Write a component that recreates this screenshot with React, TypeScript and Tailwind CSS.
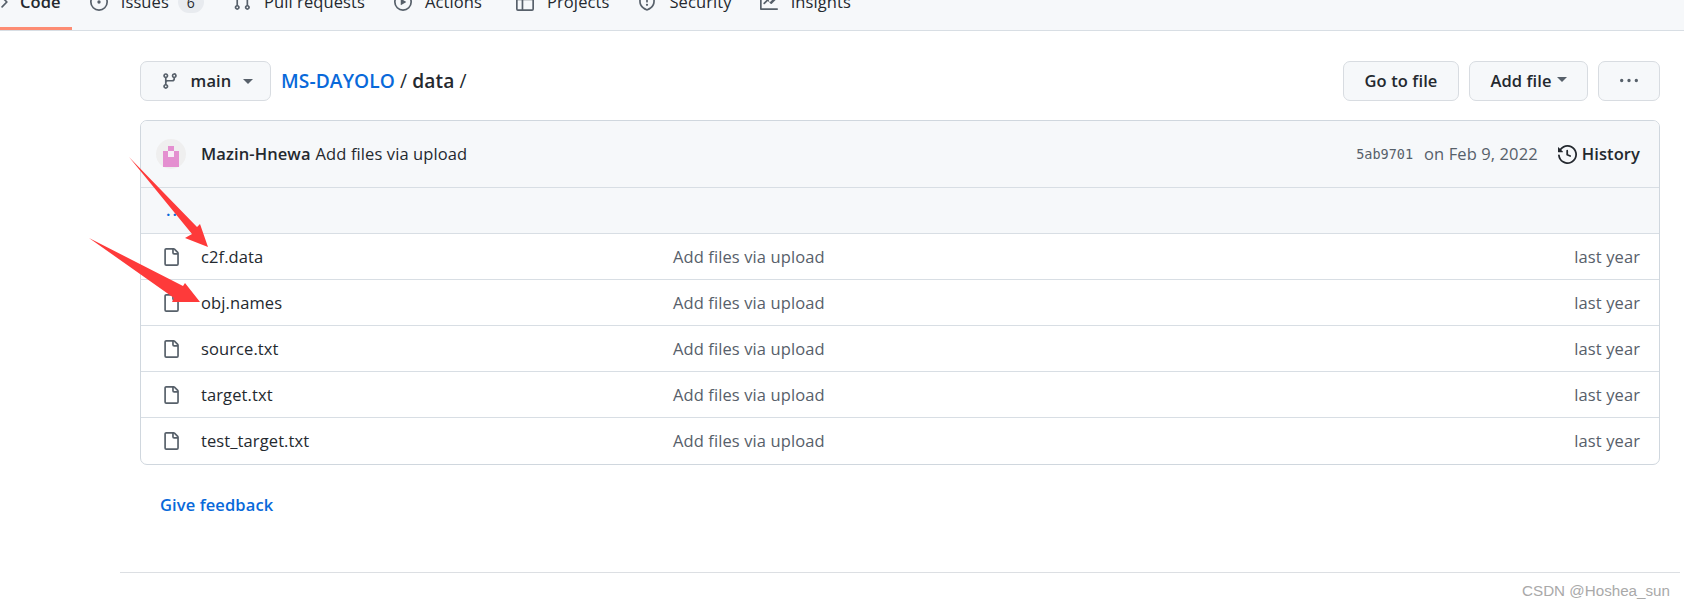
import React from "react";

const P = {
  code: "M11.28 3.22l4.25 4.25a.75.75 0 010 1.06l-4.25 4.25a.749.749 0 01-1.06-1.06L13.94 8l-3.72-3.72a.749.749 0 011.06-1.06zm-6.56 0a.751.751 0 011.042.018.751.751 0 01.018 1.042L2.06 8l3.72 3.72a.749.749 0 01-1.06 1.06L.47 8.53a.75.75 0 010-1.06l4.25-4.25z",
  issue: "M8 9.5a1.5 1.5 0 1 0 0-3 1.5 1.5 0 0 0 0 3ZM8 0a8 8 0 1 1 0 16A8 8 0 0 1 8 0ZM1.5 8a6.5 6.5 0 1 0 13 0 6.5 6.5 0 0 0-13 0Z",
  pr: "M1.5 3.25a2.25 2.25 0 1 1 3 2.122v5.256a2.251 2.251 0 1 1-1.5 0V5.372A2.25 2.25 0 0 1 1.5 3.25Zm5.677-.177L9.573.677A.25.25 0 0 1 10 .854V2.5h1A2.5 2.5 0 0 1 13.5 5v5.628a2.251 2.251 0 1 1-1.5 0V5a1 1 0 0 0-1-1h-1v1.646a.25.25 0 0 1-.427.177L7.177 3.427a.25.25 0 0 1 0-.354ZM3.75 2.5a.75.75 0 1 0 0 1.5.75.75 0 0 0 0-1.5Zm0 9.5a.75.75 0 1 0 0 1.5.75.75 0 0 0 0-1.5Zm8.25.75a.75.75 0 1 0 1.5 0 .75.75 0 0 0-1.5 0Z",
  play: "M8 0a8 8 0 1 1 0 16A8 8 0 0 1 8 0ZM1.5 8a6.5 6.5 0 1 0 13 0 6.5 6.5 0 0 0-13 0Zm4.879-2.773 4.264 2.559a.25.25 0 0 1 0 .428l-4.264 2.559A.25.25 0 0 1 6 10.559V5.442a.25.25 0 0 1 .379-.215Z",
  table: "M0 1.75C0 .784.784 0 1.75 0h12.5C15.216 0 16 .784 16 1.75v12.5A1.75 1.75 0 0 1 14.25 16H1.75A1.75 1.75 0 0 1 0 14.25ZM6.5 6.5v8h7.75a.25.25 0 0 0 .25-.25V6.5Zm8-1.5V1.75a.25.25 0 0 0-.25-.25H6.5V5Zm-13 1.5v7.75c0 .138.112.25.25.25H5v-8ZM5 5V1.5H1.75a.25.25 0 0 0-.25.25V5Z",
  shield: "M7.467.133a1.748 1.748 0 0 1 1.066 0l5.25 1.68A1.75 1.75 0 0 1 15 3.48V7c0 1.566-.32 3.182-1.303 4.682-.983 1.498-2.585 2.813-5.032 3.855a1.697 1.697 0 0 1-1.33 0c-2.447-1.042-4.049-2.357-5.032-3.855C1.32 10.182 1 8.566 1 7V3.48a1.75 1.75 0 0 1 1.217-1.667Zm.61 1.429a.25.25 0 0 0-.153 0l-5.25 1.68a.25.25 0 0 0-.174.238V7c0 1.358.275 2.666 1.057 3.86.784 1.194 2.121 2.34 4.366 3.297a.196.196 0 0 0 .154 0c2.245-.956 3.582-2.104 4.366-3.298C13.225 9.666 13.5 8.36 13.5 7V3.48a.251.251 0 0 0-.174-.237l-5.25-1.68ZM8.75 4.75v3a.75.75 0 0 1-1.5 0v-3a.75.75 0 0 1 1.5 0ZM9 10.5a1 1 0 1 1-2 0 1 1 0 0 1 2 0Z",
  graph: "M1.5 1.75V13.5h13.75a.75.75 0 0 1 0 1.5H.75a.75.75 0 0 1-.75-.75V1.75a.75.75 0 0 1 1.5 0Zm14.28 2.53-5.25 5.25a.75.75 0 0 1-1.06 0L7 7.06 4.28 9.78a.751.751 0 0 1-1.042-.018.751.751 0 0 1-.018-1.042l3.25-3.25a.75.75 0 0 1 1.06 0L8.5 8.44l4.72-4.72a.751.751 0 0 1 1.042.018.751.751 0 0 1 .018 1.042Z",
  branch: "M9.5 3.25a2.25 2.25 0 1 1 3 2.122V6A2.5 2.5 0 0 1 10 8.5H6a1 1 0 0 0-1 1v1.128a2.251 2.251 0 1 1-1.5 0V5.372a2.25 2.25 0 1 1 1.5 0v1.836A2.493 2.493 0 0 1 6 7h4a1 1 0 0 0 1-1v-.628A2.25 2.25 0 0 1 9.5 3.25Zm-6 0a.75.75 0 1 0 1.5 0 .75.75 0 0 0-1.5 0Zm8.25-.75a.75.75 0 1 0 0 1.5.75.75 0 0 0 0-1.5ZM4.25 12a.75.75 0 1 0 0 1.5.75.75 0 0 0 0-1.5Z",
  file: "M2 1.75C2 .784 2.784 0 3.75 0h6.586c.464 0 .909.184 1.237.513l2.914 2.914c.329.328.513.773.513 1.237v9.586A1.75 1.75 0 0 1 13.25 16h-9.5A1.75 1.75 0 0 1 2 14.25Zm1.75-.25a.25.25 0 0 0-.25.25v12.5c0 .138.112.25.25.25h9.5a.25.25 0 0 0 .25-.25V6h-2.75A1.75 1.75 0 0 1 9 4.25V1.5Zm6.75.062V4.25c0 .138.112.25.25.25h2.688l-.011-.013-2.914-2.914-.013-.011Z",
  history: "m.427 1.927 1.215 1.215a8.002 8.002 0 1 1-1.6 5.685.75.75 0 1 1 1.493-.154 6.5 6.5 0 1 0 1.18-4.458l1.358 1.358A.25.25 0 0 1 3.896 6H.25A.25.25 0 0 1 0 5.75V2.104a.25.25 0 0 1 .427-.177ZM7.75 4a.75.75 0 0 1 .75.75v2.992l2.028.812a.75.75 0 0 1-.557 1.392l-2.5-1A.751.751 0 0 1 7 8.25v-3.5A.75.75 0 0 1 7.75 4Z",
  kebab: "M8 9a1.5 1.5 0 1 0 0-3 1.5 1.5 0 0 0 0 3ZM1.5 9a1.5 1.5 0 1 0 0-3 1.5 1.5 0 0 0 0 3Zm13 0a1.5 1.5 0 1 0 0-3 1.5 1.5 0 0 0 0 3Z",
};

function Icon({ d, className }: { d: string; className: string }) {
  return (
    <svg viewBox="0 0 16 16" fill="currentColor" className={className}>
      <path d={d} />
    </svg>
  );
}

const tabIcon = "h-[18px] w-[18px] shrink-0 text-[#57606a]";

function Tab({ d, label, children }: { d: string; label: string; children?: React.ReactNode }) {
  return (
    <div className="flex items-center gap-[13px]">
      <Icon d={d} className={tabIcon} />
      <span>{label}</span>
      {children}
    </div>
  );
}

const files = ["c2f.data", "obj.names", "source.txt", "target.txt", "test_target.txt"];

const btn =
  "flex h-[40px] items-center justify-center rounded-[7px] border border-[#d8dce1] bg-[#f6f8fa] text-[16.5px] font-semibold text-[#24292f]";

export default function App() {
  return (
    <div className="relative h-[607px] w-[1684px] overflow-hidden bg-white font-['Open_Sans',sans-serif] text-[16.5px] tracking-[0.1px] text-[#24292f]">
      <nav className="relative h-[31px] overflow-hidden border-b border-[#d8dee4] bg-[#f6f8fa]">
        <div className="-ml-[10px] -mt-[20px] flex h-[44px] items-center gap-[29px]">
          <div className="flex items-center gap-[12px] font-semibold">
            <Icon d={P.code} className="h-[18px] w-[18px] shrink-0 text-[#57606a]" />
            <span>Code</span>
          </div>
          <Tab d={P.issue} label="Issues">
            <span className="-ml-[4px] flex h-[22px] w-[26px] items-center justify-center rounded-full bg-[#e8ebef] text-[14px] font-medium">6</span>
          </Tab>
          <Tab d={P.pr} label="Pull requests" />
          <Tab d={P.play} label="Actions" />
          <div className="ml-[5px]">
            <Tab d={P.table} label="Projects" />
          </div>
          <Tab d={P.shield} label="Security" />
          <div className="-ml-[1px]">
            <Tab d={P.graph} label="Insights" />
          </div>
        </div>
        <div className="absolute bottom-0 left-0 h-[3px] w-[72px] bg-[#fd8c73]" />
      </nav>

      <main className="ml-[140px] w-[1520px] pt-[30px]">
        <div className="flex h-[40px] items-center">
          <div className={`${btn} w-[131px] gap-[12px] pl-[3px]`}>
            <Icon d={P.branch} className="h-[18px] w-[18px] text-[#57606a]" />
            <span>main</span>
            <span className="h-0 w-0 border-x-[5px] border-t-[5px] border-x-transparent border-t-[#57606a]" />
          </div>
          <div className="ml-[10px] flex items-center gap-[5px] text-[19.2px]">
            <span className="font-semibold text-[#0969da]">MS-DAYOLO</span>
            <span>/</span>
            <span className="font-semibold">data</span>
            <span>/</span>
          </div>
          <div className="ml-auto flex gap-[10px]">
            <div className={`${btn} w-[116px]`}>Go to file</div>
            <div className={`${btn} w-[119px] gap-[5px]`}>
              <span>Add file</span>
              <span className="mb-[4px] h-0 w-0 border-x-[5px] border-t-[5px] border-x-transparent border-t-[#57606a]" />
            </div>
            <div className={`${btn} w-[62px]`}>
              <Icon d={P.kebab} className="h-[18px] w-[18px] text-[#57606a]" />
            </div>
          </div>
        </div>

        <div className="mt-[19px] h-[345px] overflow-hidden rounded-[7px] border border-[#d0d7de]">
          <div className="flex h-[66px] items-center bg-[#f6f8fa] pl-[15px] pr-[19px]">
            <svg viewBox="0 0 30 30" className="h-[30px] w-[30px] shrink-0">
              <circle cx="15" cy="15" r="15" fill="#efefef" />
              <rect x="12" y="7" width="6" height="6" fill="#e48fd0" />
              <rect x="7" y="12" width="16" height="16" fill="#e48fd0" />
              <rect x="12" y="12" width="6" height="6" fill="#f8ecf6" />
            </svg>
            <span className="ml-[15px] font-semibold">Mazin-Hnewa</span>
            <span className="ml-[5px]">Add files via upload</span>
            <span className="ml-auto font-['DejaVu_Sans_Mono',monospace] text-[13.5px] tracking-normal text-[#57606a]">5ab9701</span>
            <span className="ml-[11px] text-[#57606a]">on Feb 9, 2022</span>
            <Icon d={P.history} className="ml-[20px] h-[19px] w-[19px]" />
            <span className="ml-[5px] font-semibold">History</span>
          </div>
          <div className="flex h-[46px] items-center border-t border-[#d8dee4] bg-[#f6f8fa] pl-[25px]">
            <span className="font-semibold tracking-[2px] text-[#0969da]">..</span>
          </div>
          {files.map((f) => (
            <div key={f} className="flex h-[46px] items-center border-t border-[#d8dee4] pl-[21px] pr-[19px]">
              <Icon d={P.file} className="h-[18px] w-[18px] shrink-0 text-[#57606a]" />
              <span className="ml-[21px] w-[472px] pt-[1px]">{f}</span>
              <span className="pt-[1px] text-[#57606a]">Add files via upload</span>
              <span className="ml-auto pt-[1px] text-[#57606a]">last year</span>
            </div>
          ))}
        </div>

        <div className="ml-[20px] mt-[28px] font-semibold text-[#0969da]">Give feedback</div>
      </main>

      <div className="ml-[120px] mt-[54px] h-px w-[1560px] bg-[#dcdfe3]" />

      <div className="absolute right-[14px] top-[580px] font-['Liberation_Sans',sans-serif] text-[15.2px] tracking-normal text-[#a9a9a9]">CSDN @Hoshea_sun</div>

      <svg className="pointer-events-none absolute left-0 top-0 h-[607px] w-[1684px]" viewBox="0 0 1684 607">
        <polygon points="129,157 197,227 200,224 208,247 185,238 192,234" fill="#fe3a3a" />
        <polygon points="89,238 183,286 185,283 200,302 172,302 174,298" fill="#fe3a3a" />
      </svg>
    </div>
  );
}
